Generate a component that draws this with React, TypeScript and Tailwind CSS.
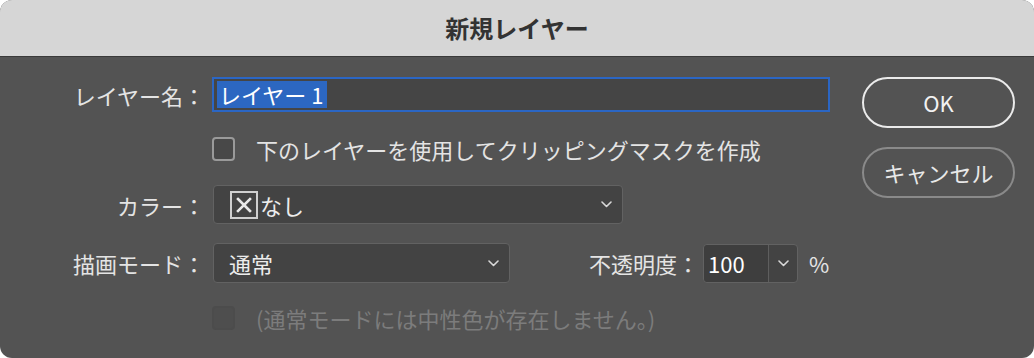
import React from 'react';

function Chevron() {
  return (
    <svg width="11" height="7" viewBox="0 0 11 7" fill="none">
      <polyline points="1,1 5.5,5.5 10,1" stroke="#d8d8d8" strokeWidth="1.6" strokeLinecap="round" strokeLinejoin="round" />
    </svg>
  );
}

function NoColorIcon() {
  return (
    <div className="w-[28px] h-[28px] border-2 border-[#d0d0d0] flex items-center justify-center">
      <svg width="16" height="16" viewBox="0 0 16 16">
        <path d="M2 2 L14 14 M14 2 L2 14" stroke="#e8e8e8" strokeWidth="2.6" strokeLinecap="square" />
      </svg>
    </div>
  );
}

export default function App() {
  return (
    <div className="w-[1034px] h-[358px] bg-white">
      <div
        className="h-full rounded-[12px] overflow-hidden bg-[#535353] flex flex-col text-[#e4e4e4]"
        style={{ fontFamily: '"Noto Sans CJK JP", "Noto Sans", sans-serif' }}
      >
        {/* Title bar */}
        <div className="h-[57px] shrink-0 bg-[#d6d6d6] border-b border-[#3a3a3a] flex items-center justify-center text-[24px] font-bold text-[#333333]">
          新規レイヤー
        </div>

        <div className="flex flex-1 pt-[20px]">
          {/* Fields */}
          <div className="w-[862px] flex flex-col">
            {/* Layer name */}
            <div className="flex items-center h-[35px]">
              <div className="w-[205px] text-right text-[22px] leading-none">レイヤー名：</div>
              <div className="ml-[7px] w-[618px] h-[35px] border-2 border-[#2b66c4] bg-[#454545] flex items-center px-[3px]">
                <span className="bg-[#2c67c1] text-white text-[22px] leading-[27px] pl-[2px] pr-[4px]">レイヤー 1</span>
              </div>
            </div>

            {/* Clipping mask */}
            <div className="flex items-center h-[30px] mt-[22px] pl-[212px]">
              <div className="w-[23px] h-[24px] rounded-[4px] border-2 border-[#9a9a9a] bg-[#484848]" />
              <span className="ml-[21px] text-[22px] leading-none">下のレイヤーを使用してクリッピングマスクを作成</span>
            </div>

            {/* Color */}
            <div className="flex items-center h-[39px] mt-[21px]">
              <div className="w-[205px] text-right text-[22px] leading-none">カラー：</div>
              <div className="ml-[8px] w-[410px] h-[39px] rounded-[4px] border border-[#626262] bg-[#434343] flex items-center pl-[16px] pr-[10px]">
                <NoColorIcon />
                <span className="ml-[2px] text-[22px] leading-none text-[#ececec]">なし</span>
                <div className="ml-auto">
                  <Chevron />
                </div>
              </div>
            </div>

            {/* Blend mode + opacity */}
            <div className="flex items-center h-[40px] mt-[19px]">
              <div className="w-[205px] text-right text-[22px] leading-none">描画モード：</div>
              <div className="ml-[8px] w-[297px] h-[40px] rounded-[4px] border border-[#626262] bg-[#434343] flex items-center pl-[15px] pr-[10px]">
                <span className="text-[22px] leading-none text-[#ececec]">通常</span>
                <div className="ml-auto">
                  <Chevron />
                </div>
              </div>
              <div className="ml-[79px] text-[22px] leading-none">不透明度：</div>
              <div className="ml-[4px] h-[39px] rounded-[4px] border border-[#626262] bg-[#434343] flex">
                <div className="w-[64px] flex items-center pl-[4px] bg-[#3e3e3e] rounded-l-[4px] text-[22px] leading-none text-white">100</div>
                <div className="w-[29px] border-l border-[#5e5e5e] flex items-center justify-center">
                  <Chevron />
                </div>
              </div>
              <div className="ml-[11px] text-[22px] leading-none">%</div>
            </div>

            {/* Disabled neutral color */}
            <div className="flex items-center h-[30px] mt-[20px] pl-[212px]">
              <div className="w-[23px] h-[24px] rounded-[4px] border-2 border-[#4c4c4c] bg-[#4e4e4e]" />
              <span className="ml-[21px] text-[22px] leading-none text-[#7c7c7c]">(通常モードには中性色が存在しません。)</span>
            </div>
          </div>

          {/* Buttons */}
          <div className="flex flex-col w-[153px]">
            <button type="button" className="h-[51px] rounded-full border-2 border-[#ebebeb] text-[22px] text-[#f2f2f2] flex items-center justify-center">
              OK
            </button>
            <button type="button" className="mt-[19px] h-[51px] rounded-full border-2 border-[#8a8a8a] text-[22px] text-[#e8e8e8] flex items-center justify-center">
              キャンセル
            </button>
          </div>
        </div>
      </div>
    </div>
  );
}
